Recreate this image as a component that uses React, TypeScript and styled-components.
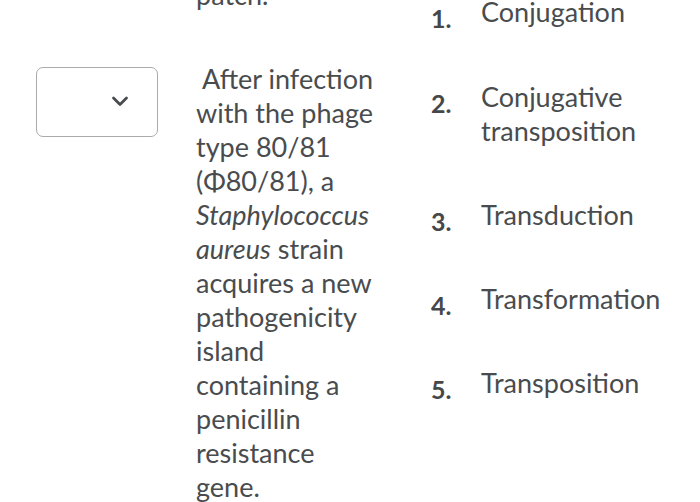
import React from "react";
import styled, { createGlobalStyle } from "styled-components";

const GlobalStyle = createGlobalStyle`
  html, body {
    margin: 0;
    padding: 0;
    background: #ffffff;
    overflow: hidden;
  }
  body {
    font-family: Lato, "Noto Sans", sans-serif;
    color: #494c4e;
  }
`;

const Page = styled.div`
  display: flex;
  align-items: flex-start;
  width: 700px;
  height: 502px;
  overflow: hidden;
`;

const MatchColumn = styled.div`
  width: 400px;
  flex: none;
  display: flex;
  flex-direction: column;
  gap: 50.4px;
  margin-top: -22.5px;
`;

const MatchRow = styled.div`
  display: flex;
  align-items: flex-start;
  padding-left: 36px;
`;

const SelectCell = styled.div`
  width: 122px;
  flex: none;
  margin-right: 38px;
`;

const SelectBox = styled.div`
  box-sizing: border-box;
  width: 122px;
  height: 70px;
  margin-top: 5px;
  border: 1px solid #a9abad;
  border-radius: 7px;
  background: #ffffff;
  display: flex;
  align-items: center;
  justify-content: flex-end;
  padding-right: 28px;
`;

const QuestionText = styled.div`
  width: 184px;
  font-size: 27px;
  line-height: 34px;
  color: #494c4e;
`;

const ChoiceList = styled.ol`
  list-style: none;
  margin: -4.8px 0 0 0;
  padding: 0 0 0 31px;
  display: flex;
  flex-direction: column;
  gap: 50.3px;
`;

const Choice = styled.li`
  display: flex;
  align-items: flex-start;
`;

const ChoiceNumber = styled.span`
  width: 50px;
  flex: none;
  padding-top: 12px;
  font-size: 25px;
  line-height: 22px;
  font-weight: 700;
  color: #45474a;
`;

const ChoiceLabel = styled.span`
  width: 200px;
  font-size: 27px;
  line-height: 34px;
  color: #494c4e;
`;

const Chevron = () => (
  <svg width="18" height="11" viewBox="0 0 18 11" aria-hidden="true">
    <polyline
      points="2.5,2 9,8.5 15.5,2"
      fill="none"
      stroke="#494c4e"
      strokeWidth="2.8"
      strokeLinecap="round"
      strokeLinejoin="round"
    />
  </svg>
);

const choices = [
  "Conjugation",
  "Conjugative transposition",
  "Transduction",
  "Transformation",
  "Transposition",
];

export default function App() {
  return (
    <>
      <GlobalStyle />
      <Page>
        <MatchColumn>
          <MatchRow>
            <SelectCell />
            <QuestionText>patch.</QuestionText>
          </MatchRow>
          <MatchRow>
            <SelectCell>
              <SelectBox>
                <Chevron />
              </SelectBox>
            </SelectCell>
            <QuestionText>
              {"\u00a0"}After infection with the phage type 80/81 (Φ80/81), a{" "}
              <em>Staphylococcus aureus</em> strain acquires a new pathogenicity
              island containing a penicillin resistance gene.
            </QuestionText>
          </MatchRow>
        </MatchColumn>
        <ChoiceList>
          {choices.map((c, i) => (
            <Choice key={c}>
              <ChoiceNumber>{i + 1}.</ChoiceNumber>
              <ChoiceLabel>{c}</ChoiceLabel>
            </Choice>
          ))}
        </ChoiceList>
      </Page>
    </>
  );
}
